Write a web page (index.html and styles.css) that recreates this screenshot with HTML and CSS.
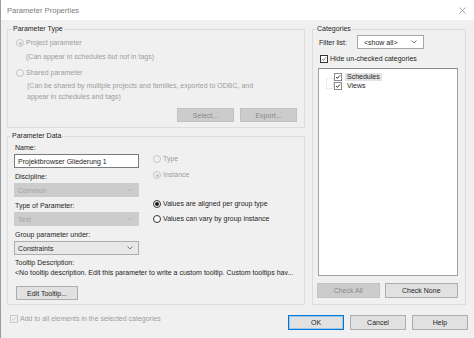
FILE: index.html
```html
<!doctype html>
<html lang="en">
  <head>
    <meta charset="UTF-8" />
    <title>Parameter Properties</title>
    <link rel="stylesheet" href="styles.css">
  </head>
  <body>
    <div class="window">
      <!-- Title bar -->
      <div class="titlebar">
        <span>Parameter Properties</span>
        <svg class="close" width="7" height="7" viewBox="0 0 7 7"><path d="M0.5 0.5 L6.5 6.5 M6.5 0.5 L0.5 6.5" stroke="#9a9a9a" stroke-width="0.9" fill="none"/></svg>
      </div>

      <div class="main">
        <div class="left">
          <!-- Parameter Type -->
          <fieldset class="group group-type">
            <legend>Parameter Type</legend>
            <div class="row disabled first"><span class="radio dis on"></span>Project parameter</div>
            <div class="desc disabled">(Can appear in schedules but not in tags)</div>
            <div class="row disabled shared"><span class="radio dis"></span>Shared parameter</div>
            <div class="desc desc2 disabled">(Can be shared by multiple projects and families, exported to ODBC, and<br>appear in schedules and tags)</div>
            <div class="type-buttons">
              <span class="btn btn-disabled w57">Select...</span>
              <span class="btn btn-disabled w57">Export...</span>
            </div>
          </fieldset>

          <!-- Parameter Data -->
          <fieldset class="group group-data">
            <legend>Parameter Data</legend>
            <div class="data-top">
              <div class="data-fields">
                <div class="label first">Name:</div>
                <div class="field input">Projektbrowser Gliederung 1</div>
                <div class="label">Discipline:</div>
                <div class="field combo combo-disabled"><span>Common</span><svg class="chev" width="6" height="4" viewBox="0 0 6 4"><path d="M0.5 0.5 L3 3 L5.5 0.5" stroke="#b4b4b4" fill="none" stroke-width="0.8"/></svg></div>
                <div class="label">Type of Parameter:</div>
                <div class="field combo combo-disabled"><span>Text</span><svg class="chev" width="6" height="4" viewBox="0 0 6 4"><path d="M0.5 0.5 L3 3 L5.5 0.5" stroke="#b4b4b4" fill="none" stroke-width="0.8"/></svg></div>
                <div class="label">Group parameter under:</div>
                <div class="field combo"><span>Constraints</span><svg class="chev" width="6" height="4" viewBox="0 0 6 4"><path d="M0.5 0.5 L3 3 L5.5 0.5" stroke="#606060" fill="none" stroke-width="0.8"/></svg></div>
              </div>
              <div class="data-options">
                <div class="row disabled opt-type"><span class="radio dis"></span>Type</div>
                <div class="row disabled opt-instance"><span class="radio dis on"></span>Instance</div>
                <div class="row opt-aligned"><span class="radio on"></span>Values are aligned per group type</div>
                <div class="row opt-vary"><span class="radio"></span>Values can vary by group instance</div>
              </div>
            </div>
            <div class="label tooltip-label">Tooltip Description:</div>
            <div class="tooltip-text">&lt;No tooltip description. Edit this parameter to write a custom tooltip. Custom tooltips hav...</div>
            <span class="btn edit-tooltip">Edit Tooltip...</span>
          </fieldset>
        </div>

        <!-- Categories -->
        <fieldset class="group group-cat">
          <legend>Categories</legend>
          <div class="filter-row">
            <span class="filter-label">Filter list:</span>
            <div class="combo combo-white filter-combo"><span>&lt;show all&gt;</span><svg class="chev" width="6" height="4" viewBox="0 0 6 4"><path d="M0.5 0.5 L3 3 L5.5 0.5" stroke="#606060" fill="none" stroke-width="0.8"/></svg></div>
          </div>
          <div class="row hide-row">
            <span class="check"><svg width="8" height="8" viewBox="0 0 8 8"><path d="M1.3 4.1 L3.1 5.9 L6.8 1.8" fill="none" stroke="#222" stroke-width="0.9"/></svg></span>Hide un-checked categories
          </div>
          <div class="cat-list">
            <div class="tree-box"></div>
            <div class="cat-item"><span class="check small"><svg width="8" height="8" viewBox="0 0 8 8"><path d="M1.5 4.1 L3.2 5.8 L6.6 2" fill="none" stroke="#111" stroke-width="1.2"/></svg></span><span class="cat-name selected">Schedules</span></div>
            <div class="cat-item"><span class="check small"><svg width="8" height="8" viewBox="0 0 8 8"><path d="M1.5 4.1 L3.2 5.8 L6.6 2" fill="none" stroke="#111" stroke-width="1.2"/></svg></span><span class="cat-name">Views</span></div>
          </div>
          <div class="cat-buttons">
            <span class="btn btn-disabled check-all">Check All</span>
            <span class="btn check-none">Check None</span>
          </div>
        </fieldset>
      </div>

      <!-- Footer -->
      <div class="footer">
        <div class="row disabled add-all">
          <span class="check dis"><svg width="8" height="8" viewBox="0 0 8 8"><path d="M1.3 4.1 L3.1 5.9 L6.8 1.8" fill="none" stroke="#bdbdbd" stroke-width="0.9"/></svg></span>Add to all elements in the selected categories
        </div>
        <div class="dialog-buttons">
          <span class="btn btn-ok">OK</span>
          <span class="btn">Cancel</span>
          <span class="btn">Help</span>
        </div>
      </div>
    </div>
  </body>
</html>
```

FILE: styles.css
```css
* {
  box-sizing: border-box;
}

body {
  margin: 0;
  font-family: "Liberation Sans", Arial, sans-serif;
  font-size: 7px;
  color: #1e1e1e;
  background: #ffffff;
}

.window {
  width: 474px;
  height: 338px;
  background: #f0f0f0;
  border-left: 1px solid #9c9c9c;
  display: flex;
  flex-direction: column;
}

/* Title bar */
.titlebar {
  height: 20px;
  flex: none;
  background: #ffffff;
  color: #7a7a7a;
  font-size: 7.6px;
  display: flex;
  align-items: center;
  justify-content: space-between;
  padding: 0 8px 0 6px;
}

.main {
  display: flex;
  gap: 7px;
  padding: 4px 0 0 6px;
}

.left {
  width: 298px;
  display: flex;
  flex-direction: column;
  gap: 3px;
}

/* Group boxes */
.group {
  margin: 0;
  border: 1px solid #dcdcdc;
  padding: 0 6px 0 7px;
  min-width: 0;
}

.group legend {
  padding: 0 1px;
  margin-left: -3px;
  line-height: 10px;
  color: #1e1e1e;
}

.group-type {
  height: 104px;
}

.group-data {
  height: 174px;
  padding-left: 6px;
}

.group-cat {
  width: 154px;
  height: 281px;
  padding: 0 7px 0 5px;
}

.group-cat legend {
  margin-left: -2px;
}

/* Rows, radios and checks */
.row {
  display: flex;
  align-items: center;
  height: 10px;
  line-height: 10px;
  white-space: nowrap;
}

.disabled {
  color: #9d9d9d;
}

.radio {
  width: 8px;
  height: 8px;
  flex: none;
  border: 1px solid #333333;
  border-radius: 50%;
  background: #ffffff;
  display: inline-flex;
  align-items: center;
  justify-content: center;
  margin-right: 2px;
}

.radio.on::after {
  content: "";
  width: 4px;
  height: 4px;
  border-radius: 50%;
  background: #1a1a1a;
}

.radio.dis {
  border-color: #c6c6c6;
  background: transparent;
}

.radio.dis.on::after {
  background: #c0c0c0;
  width: 3px;
  height: 3px;
}

.check {
  width: 8px;
  height: 8px;
  flex: none;
  border: 1px solid #333333;
  background: #ffffff;
  display: inline-flex;
  align-items: center;
  justify-content: center;
  margin-right: 2px;
}

.check svg {
  display: block;
}

.check.dis {
  border-color: #c8c8c8;
  background: transparent;
}

/* Parameter Type */
.group-type .first {
  margin-top: 4px;
  padding-left: 1px;
}

.desc {
  line-height: 10px;
  margin-top: 4px;
  padding-left: 11px;
}

.group-type .shared {
  margin-top: 6px;
  padding-left: 1px;
}

.desc2 {
  line-height: 11px;
  margin-top: 2px;
  padding-left: 12px;
}

.type-buttons {
  display: flex;
  justify-content: flex-end;
  gap: 6px;
  margin-top: 6px;
  padding-right: 1px;
}

/* Buttons */
.btn {
  display: inline-flex;
  align-items: center;
  justify-content: center;
  height: 15px;
  background: #e1e1e1;
  border: 1px solid #adadad;
  color: #1e1e1e;
  white-space: nowrap;
}

.btn-disabled {
  background: #cccccc;
  border-color: #c2c2c2;
  color: #8a8a8a;
}

.w57 {
  width: 57px;
  height: 14px;
}

/* Parameter Data */
.data-top {
  display: flex;
  gap: 14px;
}

.data-fields {
  width: 125px;
  display: flex;
  flex-direction: column;
}

.label {
  line-height: 10px;
  margin-top: 4px;
  padding-left: 1px;
  white-space: nowrap;
}

.label.first {
  margin-top: 2px;
}

.field {
  height: 14px;
  margin-top: 1px;
  display: flex;
  align-items: center;
  padding: 0 5px 0 3px;
}

.input {
  background: #ffffff;
  border: 1px solid #7a7a7a;
}

.combo {
  justify-content: space-between;
  background: #e8e8e8;
  border: 1px solid #acacac;
}

.combo-disabled {
  background: #cccccc;
  border-color: #cccccc;
  color: #a2a2a2;
}

.combo-white {
  background: #ffffff;
  border-color: #a6a6a6;
}

.chev {
  display: block;
  flex: none;
}

.data-options {
  display: flex;
  flex-direction: column;
}

.opt-type {
  margin-top: 13px;
}

.opt-instance {
  margin-top: 6px;
}

.opt-aligned {
  margin-top: 19px;
}

.opt-vary {
  margin-top: 5px;
}

.tooltip-label {
  margin-top: 3px;
}

.tooltip-text {
  line-height: 10px;
  white-space: nowrap;
  padding-left: 1px;
}

.edit-tooltip {
  width: 62px;
  height: 14px;
  margin: 8px 0 0 2px;
}

/* Categories */
.filter-row {
  display: flex;
  align-items: center;
  margin-top: 1px;
}

.filter-label {
  width: 39px;
  padding-left: 1px;
}

.filter-combo {
  width: 67px;
  height: 14px;
  padding: 0 6px 0 6px;
  display: flex;
  align-items: center;
}

.hide-row {
  margin-top: 5px;
  padding-left: 2px;
}

.cat-list {
  height: 208px;
  margin-top: 4px;
  background: #ffffff;
  border: 1px solid #a0a0a0;
  border-top-color: #8a8a8a;
  padding: 3px 0 0 15px;
}

.tree-box {
  float: left;
  width: 8px;
  height: 11px;
  margin: 6px 0 0 -8px;
  border: 1px solid #ececec;
}

.cat-item {
  display: flex;
  align-items: center;
  height: 9px;
}

.check.small {
  width: 8px;
  height: 8px;
  border-color: #8c8c8c;
  margin-right: 3px;
}

.cat-name {
  padding: 0 2px;
  line-height: 8px;
}

.cat-name.selected {
  background: #e2e2e2;
  width: 37px;
}

.cat-buttons {
  display: flex;
  gap: 5px;
  margin-top: 7px;
  margin-left: -1px;
}

.check-all {
  width: 63px;
}

.check-none {
  width: 74px;
}

/* Footer */
.footer {
  display: flex;
  justify-content: space-between;
  padding: 9px 6px 0 9px;
}

.add-all {
  margin-top: 0;
}

.dialog-buttons {
  display: flex;
  gap: 6px;
  margin-top: 1px;
}

.dialog-buttons .btn {
  width: 56px;
}

.btn-ok {
  border-color: #0078d7;
  box-shadow: inset 0 0 0 1px #9cc7ea;
}
```
